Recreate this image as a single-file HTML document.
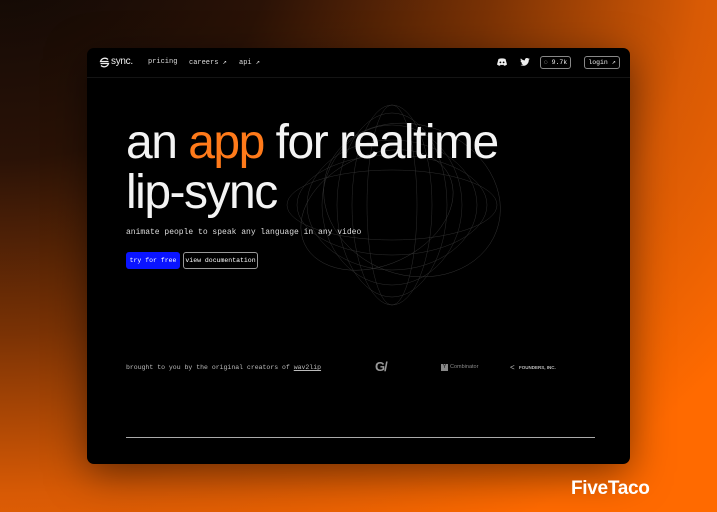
<!DOCTYPE html>
<html><head><style>
*{margin:0;padding:0;box-sizing:border-box}
body{width:717px;height:512px;overflow:hidden;position:relative;font-family:"Liberation Sans",sans-serif;
background:radial-gradient(ellipse 900px 700px at 0% -10%,#0e0805 0%,#2a1206 30%,#7a3205 55%,#d85a05 78%,#ff6a00 100%);}
.card{position:absolute;left:87px;top:48px;width:543px;height:416px;background:#000;border-radius:7px;overflow:hidden;box-shadow:0 10px 40px rgba(0,0,0,.5)}
.nav{position:absolute;left:0;top:0;width:100%;height:30px;border-bottom:1px solid #141414}
.mono{font-family:"Liberation Mono",monospace;color:#ddd}
.nav .mono{position:absolute;top:10px;font-size:7px}
.pill{position:absolute;top:8px;height:13px;border:1px solid #888;border-radius:3px;font-family:"Liberation Mono",monospace;font-size:6.5px;color:#eee;text-align:center;line-height:11px}
h1{position:absolute;left:39px;top:70px;font-weight:400;font-size:48px;line-height:50px;letter-spacing:-1.5px;color:#f4f4f4}
h1 span{color:#ff7a1a}
.btn{position:absolute;top:204px;height:17px;border-radius:3px;font-family:"Liberation Mono",monospace;font-size:6.5px;text-align:center;color:#fff}
</style></head><body>
<div class="card">
<svg style="position:absolute;left:190px;top:52px" width="230" height="210" viewBox="0 0 230 210">
<g fill="none" stroke="#3a3a3a" stroke-width="0.4">
<ellipse cx="115" cy="105" rx="105" ry="35"/>
<ellipse cx="115" cy="105" rx="95" ry="50"/>
<ellipse cx="115" cy="105" rx="85" ry="65"/>
<ellipse cx="115" cy="105" rx="70" ry="80"/>
<ellipse cx="115" cy="105" rx="55" ry="92"/>
<ellipse cx="115" cy="105" rx="40" ry="100"/>
<ellipse cx="115" cy="105" rx="25" ry="100"/>
<ellipse cx="135" cy="100" rx="90" ry="75" transform="rotate(20 135 100)"/>
<ellipse cx="100" cy="110" rx="80" ry="55" transform="rotate(-25 100 110)"/>
</g></svg>
<div class="nav">
<svg style="position:absolute;left:12px;top:9px" width="11" height="11" viewBox="0 0 11 11"><g fill="none" stroke="#eee" stroke-width="1.3"><path d="M9 2.5A4.5 4.5 0 0 0 1.5 4.5h8"/><path d="M2 8.5A4.5 4.5 0 0 0 9.5 6.5h-8"/></g></svg>
<div style="position:absolute;left:24px;top:8px;font-size:10px;color:#eee;letter-spacing:-.3px">sync.</div>
<div class="mono" style="left:61px">pricing</div>
<div class="mono" style="left:102px">careers ↗</div>
<div class="mono" style="left:152px">api ↗</div>
<svg style="position:absolute;left:410px;top:10px" width="10" height="8" viewBox="0 0 10 8"><path d="M1.5 1Q5 -0.3 8.5 1L10 6.5Q8.5 7.8 7 7.8L6.5 6.8Q5 7.2 3.5 6.8L3 7.8Q1.5 7.8 0 6.5Z" fill="#eee"/><circle cx="3.4" cy="4.4" r=".9" fill="#000"/><circle cx="6.6" cy="4.4" r=".9" fill="#000"/></svg>
<svg style="position:absolute;left:433px;top:10px" width="10" height="8" viewBox="0 0 24 20"><path d="M24 2.4a10 10 0 0 1-2.8.8A5 5 0 0 0 23.3.4a10 10 0 0 1-3.1 1.2A4.9 4.9 0 0 0 11.8 6 14 14 0 0 1 1.7.9a4.9 4.9 0 0 0 1.5 6.6 4.9 4.9 0 0 1-2.2-.6 4.9 4.9 0 0 0 3.9 4.8 4.9 4.9 0 0 1-2.2.1 4.9 4.9 0 0 0 4.6 3.4A9.9 9.9 0 0 1 0 17.3 14 14 0 0 0 7.5 19.5c9 0 14-7.5 14-14v-.6A10 10 0 0 0 24 2.4z" fill="#eee"/></svg>
<div class="pill" style="left:453px;width:31px">◌ 9.7k</div>
<div class="pill" style="left:497px;width:36px">login ↗</div>
</div>
<h1>an <span>app</span> for realtime<br>lip-sync</h1>
<div class="mono" style="position:absolute;left:39px;top:180px;font-size:8px;color:#ddd">animate people to speak any language in any video</div>
<div class="btn" style="left:39px;width:54px;background:#0a14ff;line-height:17px">try for free</div>
<div class="btn" style="left:96px;width:75px;border:1px solid #999;line-height:15px">view documentation</div>
<div class="mono" style="position:absolute;left:39px;top:316px;font-size:6.5px;color:#bbb">brought to you by the original creators of <u>wav2lip</u></div>
<div style="position:absolute;left:288px;top:311px;font-size:13px;color:#999;font-weight:700;letter-spacing:-1px">G/</div>
<div style="position:absolute;left:354px;top:316px;width:7px;height:7px;background:#888;color:#000;font-size:5px;text-align:center;line-height:7px">Y</div>
<div style="position:absolute;left:363px;top:316px;font-size:5.5px;color:#888">Combinator</div>
<div style="position:absolute;left:423px;top:315px;font-size:8px;color:#bbb">&lt;</div>
<div style="position:absolute;left:432px;top:317px;font-size:4.5px;color:#bbb;font-weight:700">FOUNDERS, INC.</div>
<div style="position:absolute;left:39px;top:389px;width:469px;height:1px;background:#aaa"></div>
</div>
<div style="position:absolute;left:571px;top:478px;font-size:19px;font-weight:700;color:#fff;letter-spacing:-.3px">FiveTaco</div>
</body></html>
